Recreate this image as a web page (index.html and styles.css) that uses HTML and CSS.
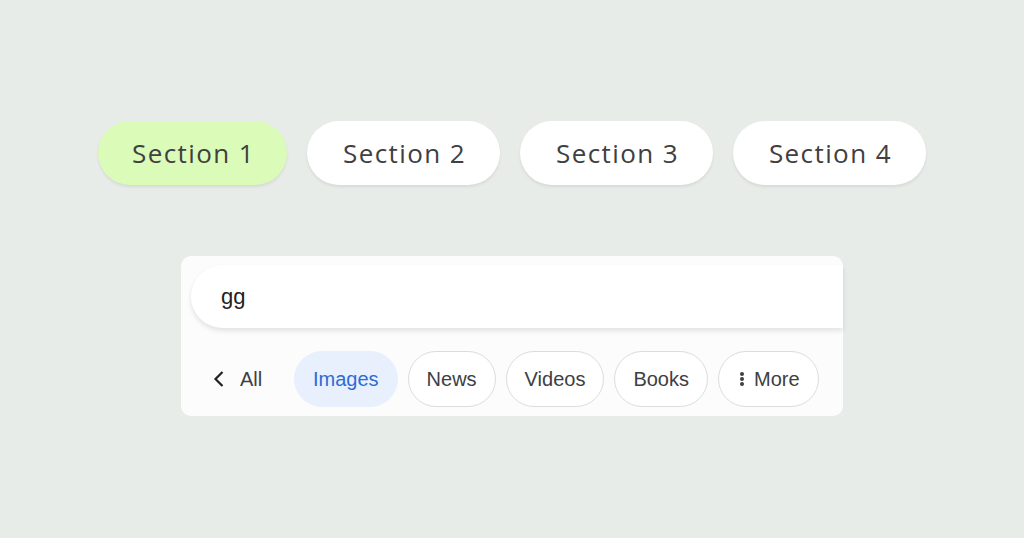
FILE: index.html
```html
<!DOCTYPE html>
<html lang="en">
<head>
  <meta charset="UTF-8" />
  <title>Tabs</title>
  <link rel="stylesheet" href="styles.css">
</head>
<body>

  <div class="page">

    <!-- Section pills -->
    <div class="sections">
      <div class="section active">Section 1</div>
      <div class="section">Section 2</div>
      <div class="section">Section 3</div>
      <div class="section">Section 4</div>
    </div>

    <!-- Search card -->
    <div class="card">
      <div class="search-bar">gg</div>
      <div class="chips">
        <div class="back">
          <svg width="12" height="18" viewBox="0 0 12 18">
            <path d="M9.5 2 L2.5 9 L9.5 16" fill="none" stroke="#202124" stroke-width="2.2" />
          </svg>
          <span>All</span>
        </div>
        <div class="chip selected">Images</div>
        <div class="chip">News</div>
        <div class="chip">Videos</div>
        <div class="chip">Books</div>
        <div class="chip more">
          <svg width="6" height="16" viewBox="0 0 6 16">
            <circle cx="3" cy="3" r="2" fill="#3c4043" />
            <circle cx="3" cy="8" r="2" fill="#3c4043" />
            <circle cx="3" cy="13" r="2" fill="#3c4043" />
          </svg>
          More
        </div>
      </div>
    </div>

  </div>

</body>
</html>
```

FILE: styles.css
```css
* {
  box-sizing: border-box;
}
html, body {
  margin: 0;
  padding: 0;
  height: 100%;
  background-color: #e8ece9;
}
.page {
  display: flex;
  flex-direction: column;
  align-items: center;
  padding-top: 121px;
}
.sections {
  display: flex;
  gap: 20px;
}
.section {
  height: 64px;
  padding: 0 34px 0 36px;
  border-radius: 32px;
  background: #fff;
  display: flex;
  align-items: center;
  font-family: 'Open Sans', sans-serif;
  font-size: 26px;
  letter-spacing: 1.4px;
  color: #404040;
  box-shadow: 0 2px 3px rgba(0, 0, 0, 0.08);
}
.section.active {
  background: #dbfbb9;
  padding: 0 32px 0 34px;
}
.card {
  margin-top: 71px;
  width: 662px;
  padding: 9px 0 9px 10px;
  background: #fcfcfc;
  border-radius: 10px;
  font-family: 'Liberation Sans', Arial, sans-serif;
}
.search-bar {
  height: 63px;
  background: #fff;
  border-radius: 32px 0 0 32px;
  box-shadow: 0 3px 5px rgba(0, 0, 0, 0.1);
  display: flex;
  align-items: center;
  padding-left: 30px;
  font-size: 22px;
  color: #202124;
}
.chips {
  display: flex;
  align-items: center;
  gap: 10px;
  margin-top: 23px;
}
.back {
  display: flex;
  align-items: center;
  gap: 15px;
  padding-left: 22px;
  width: 93px;
  font-size: 20px;
  color: #3c4043;
}
.chip {
  height: 56px;
  padding: 0 18px;
  border: 1px solid #dadce0;
  border-radius: 28px;
  background: #fff;
  display: flex;
  align-items: center;
  font-size: 20px;
  color: #3c4043;
}
.chip.selected {
  background: #e8f0fe;
  border-color: #e8f0fe;
  color: #2f6bd6;
}
.chip.more {
  gap: 9px;
  padding-left: 20px;
}
```
